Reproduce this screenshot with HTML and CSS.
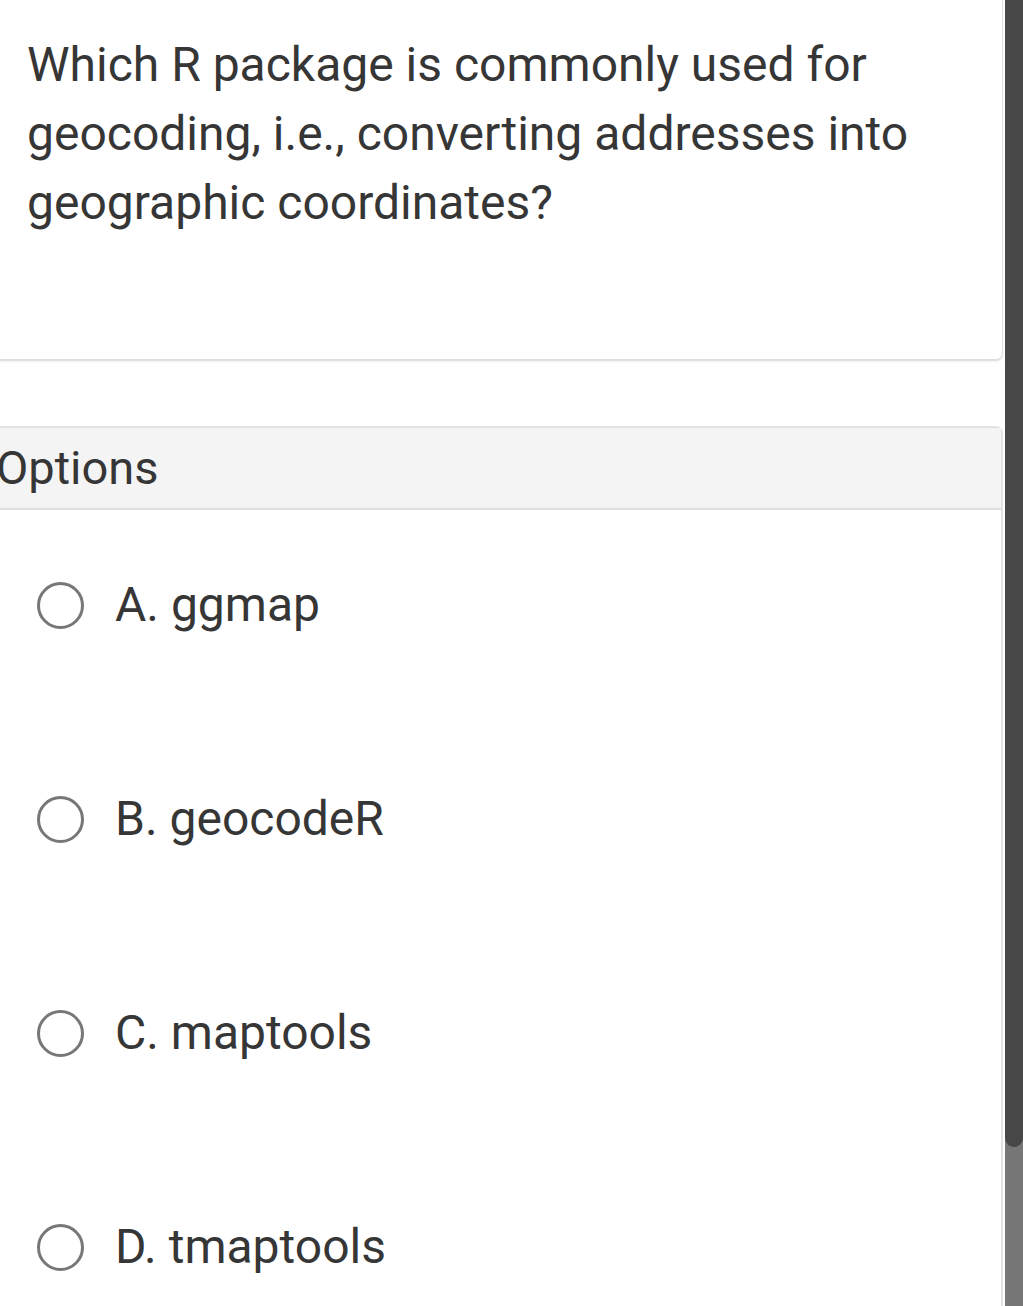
FILE: index.html
```html
<!DOCTYPE html>
<html lang="en">
<head>
    <meta charset="UTF-8">
    <meta name="viewport" content="width=device-width, initial-scale=1.0">
    <title>Question</title>
    <link rel="stylesheet" href="styles.css">
</head>
<body>
    <div class="screen">
        <main class="content">
            <div class="question-card">
                <p class="question-text">Which R package is commonly used for geocoding, i.e., converting addresses into geographic coordinates?</p>
            </div>

            <div class="options-card">
                <div class="options-header">Options</div>
                <ul class="option-list">
                    <li class="option"><span class="radio"></span><span class="option-label">A. ggmap</span></li>
                    <li class="option"><span class="radio"></span><span class="option-label">B. geocodeR</span></li>
                    <li class="option"><span class="radio"></span><span class="option-label">C. maptools</span></li>
                    <li class="option"><span class="radio"></span><span class="option-label">D. tmaptools</span></li>
                </ul>
            </div>
        </main>

        <div class="scrollbar">
            <div class="scroll-thumb"></div>
        </div>
    </div>
</body>
</html>
```

FILE: styles.css
```css
html, body {
    margin: 0;
    padding: 0;
    height: 100%;
    overflow: hidden;
}
body {
    font-family: Roboto, "Noto Sans", Arial, sans-serif;
    color: #363636;
    background-color: #fff;
}
.screen {
    display: flex;
    height: 1306px;
}
.content {
    flex: 1;
    margin-left: -26px;
    margin-top: -10px;
    padding-right: 2px;
}
.question-card {
    border: 1px solid #e0e0e0;
    border-bottom-width: 2px;
    border-radius: 0 0 7px 7px;
    box-shadow: 0 1px 2px rgba(0, 0, 0, 0.06);
    padding: 39px 24px 122px 52px;
}
.question-text {
    margin: 0;
    font-size: 48px;
    line-height: 69px;
}
.options-card {
    margin-top: 65px;
    border: 2px solid #e2e2e2;
    border-bottom: none;
    border-radius: 7px 7px 0 0;
}
.options-header {
    background-color: #f4f4f4;
    border-bottom: 2px solid #dfdfdf;
    font-size: 47px;
    line-height: 80px;
    padding-left: 20px;
}
.option-list {
    list-style: none;
    margin: 0;
    padding: 0;
}
.option {
    display: flex;
    align-items: center;
    padding: 71px 0 95px 61px;
}
.radio {
    width: 41px;
    height: 41px;
    border: 3px solid #777;
    border-radius: 50%;
    flex-shrink: 0;
}
.option-label {
    margin-left: 31px;
    font-size: 48px;
    line-height: 48px;
}
.scrollbar {
    width: 18px;
    background-color: #777;
}
.scroll-thumb {
    height: 1147px;
    background-color: #474747;
    border-radius: 0 0 9px 9px;
}
```
